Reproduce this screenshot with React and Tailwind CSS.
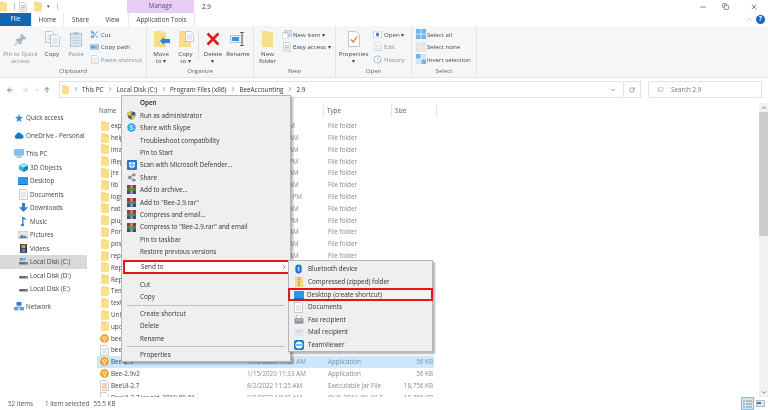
import { ArrowLeft, ArrowRight, ArrowUp, ChevronDown, ChevronUp, ChevronRight, RotateCw, Search, Minus, X, Copy as CopyIcon, Scissors, Share2 } from 'lucide-react';

const Folder = ({ className = 'w-[8px] h-[10px]' }) => (
  <svg viewBox="0 0 8 10" className={className}>
    <path d="M0 1 Q0 0 1 0 H4 L5 1 H7 Q8 1 8 2 V9 Q8 10 7 10 H1 Q0 10 0 9 Z" fill="#fbdf8f" />
    <path d="M0 2.2 H8" stroke="#f1cb6b" strokeWidth="0.4" />
  </svg>
);

const Doc = ({ className = 'w-[9px] h-[11px]', lines = '#9fc3e6' }) => (
  <svg viewBox="0 0 9 11" className={className}>
    <path d="M.5.5H6L8.5 3V10.5H.5Z" fill="#fff" stroke="#a9a9a9" strokeWidth=".6" />
    <path d="M2 4H7M2 6H7M2 8H7" stroke={lines} strokeWidth=".7" />
  </svg>
);

const Bee = () => (
  <svg viewBox="0 0 10 10" className="w-[9px] h-[9px]">
    <circle cx="5" cy="5" r="4.8" fill="#f59a1b" />
    <path d="M2 4Q5 1.8 8 4M2.5 6Q5 4 7.5 6" stroke="#fff" strokeWidth="1" fill="none" />
    <circle cx="5" cy="7.4" r="1" fill="#fff" />
  </svg>
);

const Rar = () => (
  <svg viewBox="0 0 10 10" className="w-[9px] h-[9px]">
    <rect width="10" height="3.4" fill="#a52a6a" />
    <rect y="3.3" width="10" height="3.4" fill="#2f8f3f" />
    <rect y="6.6" width="10" height="3.4" fill="#2b4fa8" />
    <rect x="3.8" width="2.4" height="10" fill="#c9a25a" />
    <rect x="4.4" y="4" width="1.2" height="2" fill="#7a4a1c" />
  </svg>
);

const Shield = () => (
  <svg viewBox="0 0 10 10" className="w-[9px] h-[9px]">
    <path d="M5 .3 9.3 1.6V5Q9.3 8 5 9.8 .7 8 .7 5V1.6Z" fill="#2d5fa8" />
    <path d="M5 .3V5H.7V1.6ZM5 5H9.3Q9.3 8 5 9.8Z" fill="#f2c230" />
  </svg>
);

const Skype = () => (
  <svg viewBox="0 0 10 10" className="w-[9px] h-[9px]">
    <circle cx="5" cy="5" r="4.7" fill="#27a8e6" />
    <path d="M7 3.4Q5 2 3.4 3.3 3 4.6 5 5T6.7 6.6Q5 8 3 6.6" stroke="#fff" strokeWidth="1" fill="none" />
  </svg>
);

const Defender = () => (
  <svg viewBox="0 0 10 10" className="w-[10px] h-[10px]">
    <rect width="10" height="10" rx="1" fill="#1f78c8" />
    <path d="M2 2.2H8V5.5Q8 7.6 5 8.6 2 7.6 2 5.5Z" fill="#fff" />
    <path d="M5 2.2V8.6M2 5H8" stroke="#1f78c8" strokeWidth=".8" />
  </svg>
);

const Monitor = ({ className = 'w-[10px] h-[8px]' }) => (
  <svg viewBox="0 0 10 8" className={className}>
    <rect width="10" height="7" fill="#2f95e6" />
    <rect y="7" width="10" height="1" fill="#1c6fb8" />
  </svg>
);

const Drive = ({ active }) => (
  <svg viewBox="0 0 10 8" className="w-[9px] h-[7px]">
    {active && <rect x="1" width="3" height="3" fill="#2f95e6" />}
    {active && <rect x="4.5" width="3" height="3" fill="#63b4ee" />}
    <rect y="4.5" width="10" height="3" rx=".6" fill="#6b6b6b" />
    <rect x="7.5" y="5.5" width="1.2" height="1" fill="#cfe9a8" />
  </svg>
);

const sideIcons = {
  quick: <svg viewBox="0 0 10 10" className="w-[8px] h-[8px]"><path d="M5 0 6.4 3.4 10 3.8 7.2 6.2 8 10 5 8 2 10 2.8 6.2 0 3.8 3.6 3.4Z" fill="#3a8fdc" /></svg>,
  cloud: <svg viewBox="0 0 12 8" className="w-[10px] h-[7px]"><path d="M3 8A2.6 2.6 0 0 1 2.6 3 3.4 3.4 0 0 1 9 2.6 2.8 2.8 0 0 1 9.6 8Z" fill="#1478c8" /></svg>,
  pc: <svg viewBox="0 0 10 9" className="w-[10px] h-[9px]"><rect width="10" height="6.6" fill="#7cc4ee" /><rect x="3" y="6.6" width="4" height="1.2" fill="#9aa7b0" /><rect x="2" y="7.8" width="6" height="1" fill="#b8c4cc" /></svg>,
  objects: <svg viewBox="0 0 10 10" className="w-[9px] h-[9px]"><path d="M5 0 10 2.4V7.6L5 10 0 7.6V2.4Z" fill="#38b4d8" /><path d="M5 5 10 2.4V7.6L5 10Z" fill="#1c86b4" /><path d="M5 0 10 2.4 5 5 0 2.4Z" fill="#9fe3f2" /></svg>,
  desktop: <Monitor />,
  documents: <Doc />,
  downloads: <svg viewBox="0 0 10 10" className="w-[9px] h-[9px]"><path d="M3.4 0H6.6V4.6H10L5 10 0 4.6H3.4Z" fill="#2f7fd0" /></svg>,
  music: <svg viewBox="0 0 10 10" className="w-[9px] h-[10px]"><path d="M3.5 8V.4Q7.5 1 8 4.4 6.6 3 5 2.9V8.4A1.8 1.6 0 1 1 3.5 8Z" fill="#2f7fd0" /></svg>,
  pictures: <svg viewBox="0 0 10 8" className="w-[10px] h-[8px]"><rect width="10" height="8" fill="#e3e6e8" stroke="#9a9a9a" strokeWidth=".5" /><path d="M1 7 4 3.5 6 5.5 7.4 4.4 9 7Z" fill="#4d7ba8" /></svg>,
  videos: <svg viewBox="0 0 8 10" className="w-[7px] h-[9px]"><rect width="8" height="10" fill="#3a3a3a" /><rect x="1.8" y="1" width="4.4" height="3.6" fill="#e0a030" /><rect x="1.8" y="5.4" width="4.4" height="3.6" fill="#4d7ed0" /></svg>,
  network: <svg viewBox="0 0 10 9" className="w-[10px] h-[9px]"><rect x="2.5" width="5" height="3.6" fill="#2f7fd0" /><rect x="0" y="5" width="4.4" height="3.4" fill="#5aa6e6" /><rect x="5.6" y="5" width="4.4" height="3.4" fill="#5aa6e6" /><path d="M5 3.6V5M2 5H8" stroke="#8a8a8a" strokeWidth=".6" /></svg>,
};

const sidebar = [
  ['Quick access', sideIcons.quick, 'top'],
  ['OneDrive - Personal', sideIcons.cloud, 'top'],
  ['This PC', sideIcons.pc, 'pc'],
  ['3D Objects', sideIcons.objects],
  ['Desktop', sideIcons.desktop],
  ['Documents', sideIcons.documents],
  ['Downloads', sideIcons.downloads],
  ['Music', sideIcons.music],
  ['Pictures', sideIcons.pictures],
  ['Videos', sideIcons.videos],
  ['Local Disk (C:)', <Drive active />, 'sel'],
  ['Local Disk (D:)', <Drive />],
  ['Local Disk (E:)', <Drive />],
  ['Network', sideIcons.network, 'net'],
];

const folderNames = ['expl', 'help', 'images', 'iReport', 'jre', 'lib', 'logs', 'native', 'plugins', 'Ports', 'postgres', 'reports', 'Reports2', 'Reports3', 'Templates', 'texts', 'Uninstall', 'updates'];
const folderTimes = ['8/2/22 11:25 AM', '8/2/2022 9:25 AM', '8/2/2022 9:25 AM', '8/2/2022 1:25 PM', '8/2/2022 9:25 AM', '8/2/2022 9:25 AM', '8/2/2022 12:11 PM', '8/2/2022 9:25 AM', '8/2/2022 1:25 PM', '8/2/2022 9:25 AM', '8/2/2022 9:25 AM', '8/2/2022 9:25 AM'];

const menuItems = [
  ['Open', null, 'bold'],
  ['Run as administrator', <Shield />],
  ['Share with Skype', <Skype />],
  ['Troubleshoot compatibility'],
  ['Pin to Start'],
  ['Scan with Microsoft Defender...', <Defender />],
  ['Share', <Share2 className="w-[9px] h-[9px] text-gray-600" />],
  ['Add to archive...', <Rar />],
  ['Add to "Bee-2.9.rar"', <Rar />],
  ['Compress and email...', <Rar />],
  ['Compress to "Bee-2.9.rar" and email', <Rar />],
  ['Pin to taskbar'],
  ['Restore previous versions'],
];

const sendToItems = [
  ['Bluetooth device', <svg viewBox="0 0 10 10" className="w-[9px] h-[10px]"><rect x="1.5" width="7" height="10" rx="3.5" fill="#1d6fd1" /><path d="M3.4 3.2 6.4 6.4 5 7.8V2.2L6.4 3.6 3.4 6.8" stroke="#fff" strokeWidth=".6" fill="none" /></svg>],
  ['Compressed (zipped) folder', <svg viewBox="0 0 8 10" className="w-[8px] h-[10px]"><rect width="8" height="10" fill="#f4d77f" /><path d="M4 0V10" stroke="#7b6a3a" strokeWidth="1.2" strokeDasharray="1 1" /></svg>],
  ['Desktop (create shortcut)', <Monitor className="w-[10px] h-[8px]" />],
  ['Documents', <Doc />],
  ['Fax recipient', <svg viewBox="0 0 10 10" className="w-[10px] h-[9px]"><rect x="2.4" width="5" height="4" fill="#fff" stroke="#9a9a9a" strokeWidth=".5" /><rect y="3.6" width="10" height="6" rx="1" fill="#8f98a3" /><rect x="2" y="5" width="6" height="1" fill="#d7dde2" /></svg>],
  ['Mail recipient', <svg viewBox="0 0 10 8" className="w-[10px] h-[7px]"><rect width="10" height="8" fill="#e3e5e8" /><path d="M0 0 5 4 10 0" stroke="#b5b8bc" strokeWidth=".6" fill="none" /></svg>],
  ['TeamViewer', <svg viewBox="0 0 10 10" className="w-[10px] h-[10px]"><rect width="10" height="10" rx="2" fill="#0e7ed6" /><circle cx="5" cy="5" r="3.6" fill="#fff" /><path d="M1.8 5 3.4 3.9V4.6H6.6V3.9L8.2 5 6.6 6.1V5.4H3.4V6.1Z" fill="#0e7ed6" /></svg>],
];

const Big = ({ icon, label, w, muted }) => (
  <div className={`flex flex-col items-center shrink-0 ${w} ${muted ? 'text-[#8d8d8d]' : 'text-[#444]'}`}>
    <div className="h-[20px] flex items-center justify-center">{icon}</div>
    <div className="mt-[1px] text-center leading-[7.4px] whitespace-pre-line">{label}</div>
  </div>
);

const Small = ({ icon, label, muted }) => (
  <div className={`flex items-center h-[12.5px] gap-[1px] whitespace-nowrap ${muted ? 'text-[#8d8d8d]' : 'text-[#444]'}`}>
    <span className="w-[11px] flex justify-center shrink-0">{icon}</span>
    {label}
  </div>
);

const Group = ({ w, label, children }) => (
  <div className={`${w} shrink-0 flex flex-col border-r border-[#e2e3e4]`}>
    <div className="h-[41px] flex pt-[3px]">{children}</div>
    <div className="text-center text-[#666] leading-[8px]">{label}</div>
  </div>
);

const Tile = ({ c = '#6db5ec', o }) => (
  <svg viewBox="0 0 10 10" className="w-[10px] h-[10px]">
    <rect width="4.6" height="4.6" fill={c} />
    <rect x="5.4" width="4.6" height="4.6" fill={o || c} />
    <rect y="5.4" width="4.6" height="4.6" fill={o || c} />
    <rect x="5.4" y="5.4" width="4.6" height="4.6" fill={c} />
  </svg>
);

const Ribbon = () => (
  <div className="h-[52px] bg-[#f5f6f7] border-b border-[#e4e5e6] flex text-[6.15px]">
    <Group w="w-[147px]" label="Clipboard">
      <Big w="w-[41px]" muted label={'Pin to Quick\naccess'} icon={
        <svg viewBox="0 0 14 14" className="w-[13px] h-[13px]"><path d="M8 .5 13.5 6 12 7 10.5 6.5 8 9.5V12L6.5 12.5 1.8 7.5 2 6.5H4.6L7.5 4 7 2Z" fill="#a9b6c4" /><path d="M4 10 .6 13.4" stroke="#a9b6c4" strokeWidth="1.2" /></svg>} />
      <Big w="w-[22px]" label="Copy" icon={
        <span className="relative w-[15px] h-[16px]">
          <Doc className="absolute left-0 top-0 w-[10px] h-[12px]" />
          <Doc className="absolute left-[5px] top-[3px] w-[10px] h-[13px]" />
        </span>} />
      <Big w="w-[26px]" muted label="Paste" icon={
        <svg viewBox="0 0 12 15" className="w-[12px] h-[15px]"><rect x=".5" y="1.5" width="11" height="13" fill="#dbe6f0" stroke="#9aa7b4" strokeWidth=".6" /><rect x="3.5" y=".3" width="5" height="2.4" fill="#b0bac4" /><path d="M2.5 6H9.5M2.5 8.5H9.5M2.5 11H9.5" stroke="#a8c5e0" strokeWidth=".7" /></svg>} />
      <div className="-mt-[1px]">
        <Small label="Cut" icon={<Scissors className="w-[9px] h-[9px] text-[#3a7fc0]" />} />
        <Small label="Copy path" icon={<svg viewBox="0 0 10 6" className="w-[9px] h-[6px]"><rect width="10" height="6" fill="#9cc3e6" /><path d="M1 3H6" stroke="#2f6fa8" /></svg>} />
        <Small muted label="Paste shortcut" icon={<Doc className="w-[8px] h-[9px]" lines="#b8c7d6" />} />
      </div>
    </Group>
    <Group w="w-[107px]" label="Organize">
      <Big w="w-[28px]" label={'Move\nto ▾'} icon={
        <span className="relative">
          <svg viewBox="0 0 14 16" className="w-[14px] h-[16px]"><path d="M0 0H8L9 1.5H12V16H0Z" fill="#fbdd87" /></svg>
          <svg viewBox="0 0 10 8" className="absolute -right-[2px] top-[6px] w-[10px] h-[8px]"><path d="M0 4 4 0V2H10V6H4V8Z" fill="#2a86d6" /></svg>
        </span>} />
      <Big w="w-[21px]" label={'Copy\nto ▾'} icon={
        <span className="relative">
          <svg viewBox="0 0 14 16" className="w-[14px] h-[16px]"><path d="M0 0H8L9 1.5H12V16H0Z" fill="#fbdd87" /></svg>
          <Doc className="absolute left-[6px] top-[0px] w-[9px] h-[11px]" />
        </span>} />
      <div className="w-px h-[28px] mt-[2px] mx-[2px] bg-[#dfe0e1]" />
      <Big w="w-[24px]" label={'Delete\n▾'} icon={
        <svg viewBox="0 0 14 14" className="w-[14px] h-[14px]"><path d="M1.5 1.5 12.5 12.5M12.5 1.5 1.5 12.5" stroke="#e01b1b" strokeWidth="2.6" /></svg>} />
      <Big w="w-[26px]" label="Rename" icon={
        <svg viewBox="0 0 16 14" className="w-[16px] h-[14px]"><rect x=".5" y="3.5" width="12" height="7" fill="#e8f0f6" stroke="#9aa7b4" strokeWidth=".6" /><rect x="2" y="5" width="7" height="4" fill="#2f95e6" /><path d="M10 .5H14M12 .5V13.5M10 13.5H14" stroke="#444" strokeWidth=".8" /></svg>} />
    </Group>
    <Group w="w-[82px]" label="New">
      <Big w="w-[27px]" label={'New\nfolder'} icon={
        <svg viewBox="0 0 11 16" className="w-[11px] h-[16px]"><path d="M0 0H6L7 1.5H11V16H0Z" fill="#fbdd87" /></svg>} />
      <div className="-mt-[1px]">
        <Small label="New item ▾" icon={<svg viewBox="0 0 10 9" className="w-[10px] h-[9px]"><rect x="3" width="7" height="6" fill="#cfe2f2" stroke="#7e9db8" strokeWidth=".5" /><rect y="3" width="6" height="6" fill="#fff" stroke="#7e9db8" strokeWidth=".5" /></svg>} />
        <Small label="Easy access ▾" icon={<Doc className="w-[8px] h-[10px]" lines="#8c8c8c" />} />
      </div>
    </Group>
    <Group w="w-[76px]" label="Open">
      <Big w="w-[35px]" label={'Properties\n▾'} icon={
        <svg viewBox="0 0 12 16" className="w-[12px] h-[16px]"><path d="M.5.5H8L11.5 4V15.5H.5Z" fill="#fff" stroke="#a5a5a5" strokeWidth=".6" /><path d="M3 8.5 5.2 11 9.2 5.5" stroke="#e8702a" strokeWidth="1.2" fill="none" /></svg>} />
      <div className="-mt-[1px] ml-[1px]">
        <Small label="Open ▾" icon={<svg viewBox="0 0 10 8" className="w-[9px] h-[7px]"><rect width="10" height="8" fill="#fff" stroke="#8aa5bd" strokeWidth=".7" /><rect x="3.5" y="2" width="3" height="4" fill="#2f7fd0" /></svg>} />
        <Small muted label="Edit" icon={<Doc className="w-[8px] h-[9px]" lines="#b8d0e6" />} />
        <Small muted label="History" icon={<svg viewBox="0 0 10 10" className="w-[9px] h-[9px]"><circle cx="5" cy="5" r="4" fill="#fff" stroke="#9fb4c6" /><path d="M5 2.8V5L6.6 6" stroke="#8aa0b4" strokeWidth=".7" fill="none" /></svg>} />
      </div>
    </Group>
    <Group w="w-[65px]" label="Select">
      <div className="-mt-[1px] ml-[3px]">
        <Small label="Select all" icon={<Tile />} />
        <Small label="Select none" icon={<Tile c="#e3e4e5" />} />
        <Small label="Invert selection" icon={<Tile c="#6db5ec" o="#d3e6f5" />} />
      </div>
    </Group>
  </div>
);

const Crumbs = () => (
  <div className="flex-1 flex items-center h-[17px] border border-[#e3e3e3] text-[#333] text-[6.35px] bg-white">
    <span className="ml-[2px]"><Folder className="w-[7px] h-[9px]" /></span>
    {['This PC', 'Local Disk (C:)', 'Program Files (x86)', 'BeeAccounting', '2.9'].map((c) => (
      <span key={c} className="flex items-center whitespace-nowrap">
        <ChevronRight className="w-[6px] h-[6px] text-[#777] mx-[3.5px]" strokeWidth={3} />
        {c}
      </span>
    ))}
    <ChevronDown className="w-[6px] h-[6px] text-[#666] ml-auto mr-[7px]" strokeWidth={2.5} />
  </div>
);

const Row = ({ name, icon, time, type, size, selected }) => (
  <div className={`flex items-center w-[337px] h-[11.8px] shrink-0 whitespace-nowrap ${selected ? 'bg-[#cce8ff]' : ''}`}>
    <span className="w-[14px] flex justify-center shrink-0 pl-[1px]">{icon}</span>
    <span className="w-[136px] text-[#444] overflow-hidden">{name}</span>
    <span className="w-[81px] text-[#8a8a8a] shrink-0">{time}</span>
    <span className="w-[73px] text-[#8a8a8a] shrink-0">{type}</span>
    <span className="w-[32px] text-[#8a8a8a] text-right shrink-0">{size}</span>
  </div>
);

export default function App() {
  return (
    <div className="relative w-[768px] h-[410px] overflow-hidden bg-white text-[6.3px] blur-[0.4px]" style={{ fontFamily: '"Open Sans", "Noto Sans", sans-serif' }}>
      {/* title bar */}
      <div className="h-[13px] flex items-center">
        <div className="flex items-center w-[128px] shrink-0 gap-[4px] -ml-[1px]">
          <Folder className="w-[8px] h-[11px]" />
          <span className="w-px h-[7px] bg-[#bbb] ml-[3px]" />
          <Doc className="w-[8px] h-[10px]" lines="#e8702a" />
          <Folder className="w-[8px] h-[11px] ml-[3px]" />
          <span className="text-[5px] text-[#333] ml-[1px]">▾</span>
          <span className="w-px h-[7px] bg-[#ccc] ml-[3px]" />
        </div>
        <div className="w-[67px] h-full bg-[#e8cdf7] text-center text-[#555] leading-[12px]">Manage</div>
        <span className="ml-[8px] text-[#333]">2.9</span>
        <div className="ml-auto flex items-center text-[#444]">
          <Minus className="w-[8px] h-[8px]" />
          <CopyIcon className="w-[7px] h-[7px] ml-[15px]" />
          <X className="w-[8px] h-[8px] ml-[21px] mr-[10px]" />
        </div>
      </div>
      {/* tabs */}
      <div className="h-[13px] flex items-center text-[#444]">
        <div className="w-[31px] h-full bg-[#0f66b3] text-white text-center leading-[12px]">File</div>
        <div className="w-[33px] h-full text-center leading-[13px] border-x border-[#e8e8e8]">Home</div>
        <div className="w-[33px] text-center">Share</div>
        <div className="w-[31px] text-center">View</div>
        <div className="w-[67px] text-center border-x border-[#e8e8e8] h-full leading-[13px]">Application Tools</div>
        <div className="ml-auto flex items-center mr-[1px]">
          <ChevronUp className="w-[7px] h-[7px] text-[#999] mr-[3px]" />
          <span className="w-[9px] h-[9px] rounded-full bg-[#0f66c4] text-white text-[7px] font-bold flex items-center justify-center mr-[2px]">?</span>
        </div>
      </div>
      <Ribbon />
      {/* address row */}
      <div className="h-[22px] flex items-center pt-[1px] pr-[6px]">
        <div className="w-[59px] shrink-0 flex items-center text-[#555] pl-[6px]">
          <ArrowLeft className="w-[8px] h-[8px]" />
          <ArrowRight className="w-[8px] h-[8px] ml-[7px] text-[#c5c5c5]" />
          <ChevronDown className="w-[6px] h-[6px] ml-[5px] text-[#888]" />
          <ArrowUp className="w-[8px] h-[8px] ml-[3px]" />
        </div>
        <Crumbs />
        <div className="w-[17px] h-[17px] border-y border-r border-[#e3e3e3] flex items-center justify-center">
          <RotateCw className="w-[6px] h-[6px] text-[#555]" />
        </div>
        <div className="w-[114px] h-[17px] ml-[7px] border border-[#e3e3e3] flex items-center text-[#777]">
          <Search className="w-[7px] h-[7px] text-[#999] ml-[8px] -scale-x-100" />
          <span className="ml-[7px]">Search 2.9</span>
        </div>
      </div>
      {/* main */}
      <div className="h-[297px] flex overflow-hidden">
        <div className="w-[87px] shrink-0 pt-[11px] text-[#444]">
          {sidebar.map(([label, icon, kind]) => (
            <div key={label} className={`flex items-center whitespace-nowrap overflow-hidden h-[13.5px] ${kind === 'top' ? 'pl-[13px] mb-[4.5px]' : kind === 'pc' ? 'pl-[13px]' : kind === 'net' ? 'pl-[13px] mt-[4px]' : 'pl-[17px]'} ${kind === 'sel' ? 'bg-[#d9d9d9]' : ''}`}>
              <span className="w-[12px] shrink-0 flex justify-center mr-px">{icon}</span>
              {label}
            </div>
          ))}
        </div>
        <div className="w-[10px] shrink-0" />
        <div className="w-[340px] shrink-0 flex flex-col">
          <div className="h-[19px] flex items-center text-[#4c607a] shrink-0 pt-[2px]">
            <span className="w-[226px] pl-[2px]">Name</span>
            <span className="w-px h-[13px] bg-[#e5e5e5]" />
            <span className="w-[67px] pl-[3px]">Type</span>
            <span className="w-px h-[13px] bg-[#e5e5e5]" />
            <span className="w-[44px] pl-[3px]">Size</span>
            <span className="w-px h-[13px] bg-[#e5e5e5]" />
          </div>
          <div className="h-[1px] shrink-0" />
          {/* rows past the twelfth sit behind the menus, only the name stub shows */}
          {folderNames.map((n, i) => (
            <Row key={n + i} name={n} icon={<Folder />} time={folderTimes[i]} type={i < 12 ? 'File folder' : ''} />
          ))}
          <Row name="bee" icon={<Bee />} />
          <Row name="bee" icon={<Doc />} />
          <Row selected name="Bee-2.9" icon={<Bee />} time="1/15/2020 11:33 AM" type="Application" size="56 KB" />
          <Row name="Bee-2.9v2" icon={<Bee />} time="1/15/2020 11:33 AM" type="Application" size="56 KB" />
          <Row name="BeeUI-2.7" icon={<Doc lines="#e8702a" />} time="8/2/2022 11:25 AM" type="Executable Jar File" size="18,756 KB" />
          <Row name="BeeUI-2.7.jar.old_2019-09-01" icon={<Doc lines="#fff" />} time="8/2/2022 10:40 AM" type="OLD_2019_09_01 F" size="18,756 KB" />
        </div>
        <div className="flex-1" />
        <div className="w-[9px] shrink-0 bg-[#f1f1f1] flex flex-col items-center mt-[3px]">
          <ChevronUp className="w-[6px] h-[7px] text-[#555] shrink-0 mt-[1px]" strokeWidth={3} />
          <div className="w-full h-[124px] bg-[#cdcdcd] mt-[1px] shrink-0" />
          <ChevronDown className="w-[6px] h-[7px] text-[#555] mt-auto mb-[1px]" strokeWidth={3} />
        </div>
      </div>
      {/* status bar */}
      <div className="h-[13px] flex items-center text-[#555] pl-[8px]">
        <span>52 items</span>
        <span className="ml-[12px]">1 item selected</span>
        <span className="ml-[4px]">55.5 KB</span>
        <div className="ml-auto flex items-center mr-[3px]">
          <div className="w-[13px] h-[13px] bg-[#cfe8f8] border border-[#7cc0e8] flex items-center justify-center">
            <svg viewBox="0 0 9 8" className="w-[9px] h-[8px]"><path d="M0 1H2M3 1H9M0 4H2M3 4H9M0 7H2M3 7H9" stroke="#777" strokeWidth=".8" /></svg>
          </div>
          <div className="w-[9px] h-[7px] ml-[2px] bg-[#dfe6ec] border border-[#bbb]">
            <div className="w-[4px] h-[2px] bg-[#2f7fd0] mt-[1px]" />
          </div>
        </div>
      </div>

      {/* context menu */}
      <div className="absolute left-[121px] top-[95px] w-[170px] h-[267px] bg-[#efefef] border border-[#b5b5b5] shadow-[2px_2px_2px_rgba(0,0,0,0.3)] text-[#333] text-[6.35px] pt-px">
        {menuItems.map(([label, icon, bold]) => (
          <div key={label} className={`flex items-center h-[12.4px] whitespace-nowrap ${bold ? 'font-semibold text-[#222]' : ''}`}>
            <span className="w-[18px] flex justify-center shrink-0 pl-px">{icon}</span>
            {label}
          </div>
        ))}
        <div className="h-[2px]" />
        <div className="flex items-center h-[14px] w-[167px] bg-white border-2 border-[#e8141c] ml-px">
          <span className="w-[16px] shrink-0" />
          Send to
          <ChevronRight className="w-[8px] h-[8px] ml-auto text-[#666]" />
        </div>
        <div className="h-[4.5px]" />
        <div className="flex items-center h-[12.4px] pl-[18px]">Cut</div>
        <div className="flex items-center h-[12.4px] pl-[18px]">Copy</div>
        <div className="h-px bg-[#c2c2c2] mx-[5px] my-[1.6px]" />
        <div className="flex items-center h-[12.4px] pl-[18px]">Create shortcut</div>
        <div className="flex items-center h-[12.4px] pl-[18px]">Delete</div>
        <div className="flex items-center h-[12.4px] pl-[18px]">Rename</div>
        <div className="h-px bg-[#c2c2c2] mx-[5px] my-[1.6px]" />
        <div className="flex items-center h-[12.4px] pl-[18px]">Properties</div>
      </div>

      {/* send to submenu */}
      <div className="absolute left-[288px] top-[260px] w-[145px] h-[92px] bg-[#efefef] border border-[#b5b5b5] shadow-[2px_2px_2px_rgba(0,0,0,0.3)] text-[#333] text-[6.35px] pt-[2px]">
        {sendToItems.map(([label, icon], i) => (
          <div key={label} className={`flex items-center h-[12.5px] whitespace-nowrap ${i === 2 ? 'border-2 border-[#e8141c] bg-[#f2f2f2] h-[13px] -mx-px' : ''}`}>
            <span className={`${i === 2 ? 'w-[17px]' : 'w-[19px]'} flex justify-center shrink-0`}>{icon}</span>
            {label}
          </div>
        ))}
      </div>
    </div>
  );
}
